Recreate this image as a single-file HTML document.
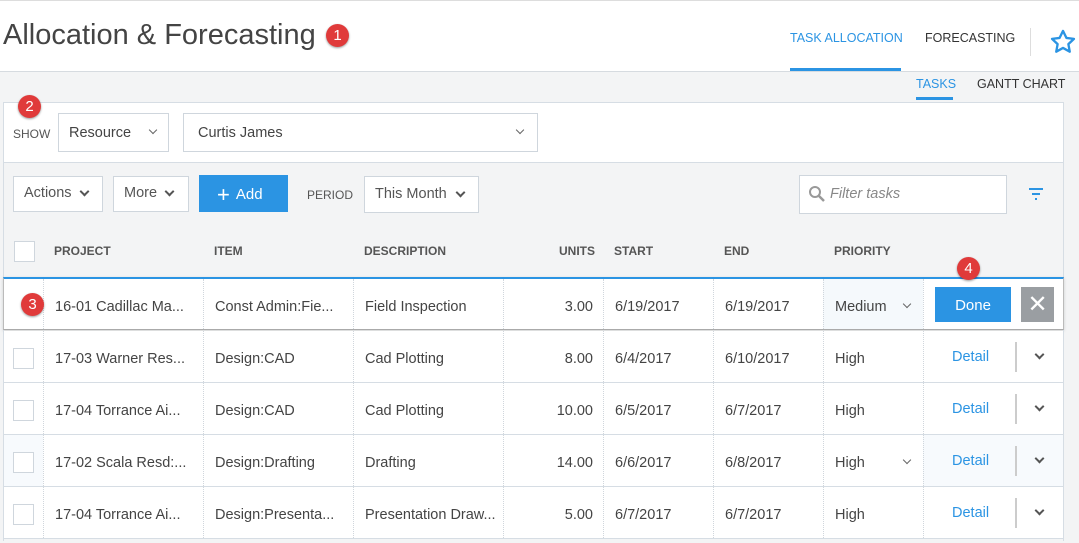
<!DOCTYPE html>
<html><head><meta charset="utf-8"><style>
*{box-sizing:border-box;margin:0;padding:0}
body{width:1079px;height:541px;overflow:hidden;background:#f3f4f5;font-family:"Liberation Sans",sans-serif;color:#444;position:relative}
.a{position:absolute}
.top{left:0;top:0;width:1079px;height:72px;background:#fff;border-top:1px solid #ddd;border-bottom:1px solid #d6dbe0}
.badge{width:23px;height:23px;border-radius:50%;background:#e03a3a;color:#fff;font-size:15px;text-align:center;line-height:23px;box-shadow:0 1px 2px rgba(0,0,0,.4)}
.box{background:#fff;border:1px solid #cfd6dd}
.chev{display:inline-block;width:7px;height:7px;border-right:2px solid #555;border-bottom:2px solid #555;transform:rotate(45deg)}
.chevt{display:inline-block;width:6px;height:6px;border-right:1px solid #666;border-bottom:1px solid #666;transform:rotate(45deg)}
.row{left:3px;width:1061px;height:52px;background:#fff;border-bottom:1px solid #d6dde4;font-size:14.5px;color:#444}
.c{position:absolute;top:0;height:100%;line-height:56px;border-left:1px dotted #d0d6dc;padding-left:11px;white-space:nowrap}
.cb{position:absolute;left:10px;top:17px;width:21px;height:21px;border:1px solid #cfd6dd;background:#fff}
.hd{font-size:12px;font-weight:bold;color:#555;position:absolute;top:19px}
.det{color:#2b94e3}
</style></head><body>
<div class="a top"></div>
<div class="a" style="left:3px;top:19px;font-size:29px;color:#444">Allocation &amp; Forecasting</div>
<div class="a badge" style="left:326px;top:24px">1</div>
<div class="a" style="left:790px;top:31px;font-size:12.5px;color:#2b94e3">TASK ALLOCATION</div>
<div class="a" style="left:790px;top:68px;width:111px;height:3px;background:#2b94e3"></div>
<div class="a" style="left:925px;top:31px;font-size:12.5px;color:#333">FORECASTING</div>
<div class="a" style="left:1030px;top:28px;width:1px;height:28px;background:#ddd"></div>
<svg class="a" style="left:1049px;top:28px" width="28" height="28" viewBox="0 0 24 24"><path d="M12 2.5l2.9 6 6.5.8-4.8 4.5 1.2 6.5L12 17.1l-5.8 3.2 1.2-6.5L2.6 9.3l6.5-.8z" fill="none" stroke="#2b94e3" stroke-width="2" stroke-linejoin="round"/></svg>
<div class="a" style="left:916px;top:77px;font-size:12.5px;color:#2b94e3">TASKS</div>
<div class="a" style="left:916px;top:97px;width:37px;height:3px;background:#2b94e3"></div>
<div class="a" style="left:977px;top:77px;font-size:12.5px;color:#333">GANTT CHART</div>

<div class="a" style="left:3px;top:102px;width:1061px;height:61px;background:#fff;border:1px solid #d6dde4"></div>
<div class="a badge" style="left:18px;top:95px">2</div>
<div class="a" style="left:13px;top:127px;font-size:12px;color:#555">SHOW</div>
<div class="a box" style="left:58px;top:113px;width:111px;height:39px"></div>
<div class="a" style="left:69px;top:125px;font-size:14.5px">Resource</div>
<div class="a chevt" style="left:150px;top:127px"></div>
<div class="a box" style="left:183px;top:113px;width:355px;height:39px"></div>
<div class="a" style="left:198px;top:125px;font-size:14.5px">Curtis James</div>
<div class="a chevt" style="left:517px;top:127px"></div>

<div class="a" style="left:3px;top:162px;width:1061px;height:64px;background:#f3f4f5;border:1px solid #d6dde4"></div>
<div class="a box" style="left:13px;top:176px;width:90px;height:36px"></div>
<div class="a" style="left:24px;top:185px;font-size:14.5px;color:#555">Actions</div>
<div class="a chev" style="left:81px;top:188px"></div>
<div class="a box" style="left:113px;top:176px;width:76px;height:36px"></div>
<div class="a" style="left:124px;top:185px;font-size:14.5px;color:#555">More</div>
<div class="a chev" style="left:166px;top:188px"></div>
<div class="a" style="left:199px;top:175px;width:89px;height:37px;background:#2b94e3;color:#fff;font-size:15px;line-height:39px;padding-left:18px"><span style="font-size:22px;vertical-align:-3px;margin-right:6px">+</span>Add</div>
<div class="a" style="left:307px;top:188px;font-size:12px;color:#555">PERIOD</div>
<div class="a box" style="left:364px;top:176px;width:115px;height:37px"></div>
<div class="a" style="left:375px;top:186px;font-size:14.5px;color:#555">This Month</div>
<div class="a chev" style="left:457px;top:189px"></div>
<div class="a box" style="left:799px;top:175px;width:208px;height:39px"></div>
<svg class="a" style="left:808px;top:185px" width="18" height="18" viewBox="0 0 18 18"><circle cx="7" cy="7" r="5" fill="none" stroke="#999" stroke-width="2"/><path d="M11 11l5 5" stroke="#999" stroke-width="2.5"/></svg>
<div class="a" style="left:830px;top:186px;font-size:14.5px;font-style:italic;color:#888">Filter tasks</div>
<svg class="a" style="left:1028px;top:187px" width="16" height="14"><path d="M1 2h14M4 7h8M7 12h2" stroke="#2b94e3" stroke-width="2"/></svg>

<div class="a" style="left:3px;top:225px;width:1061px;height:53px;background:#f3f4f5;border-left:1px solid #d6dde4;border-right:1px solid #d6dde4"></div>
<div class="a" style="left:14px;top:241px;width:21px;height:21px;border:1px solid #cfd6dd;background:#fff"></div>
<div class="hd" style="left:54px;top:244px">PROJECT</div>
<div class="hd" style="left:214px;top:244px">ITEM</div>
<div class="hd" style="left:364px;top:244px">DESCRIPTION</div>
<div class="hd" style="left:559px;top:244px">UNITS</div>
<div class="hd" style="left:614px;top:244px">START</div>
<div class="hd" style="left:724px;top:244px">END</div>
<div class="hd" style="left:834px;top:244px">PRIORITY</div>

<div class="a row" style="top:277px;height:53px;border-top:2px solid #2b94e3;border-bottom:1px solid #aaa;border-left:1px solid #bbb;border-right:1px solid #bbb;box-shadow:0 1px 3px rgba(0,0,0,.15)">
<div class="c" style="left:39px;width:160px">16-01 Cadillac Ma...</div>
<div class="c" style="left:199px;width:150px">Const Admin:Fie...</div>
<div class="c" style="left:349px;width:150px">Field Inspection</div>
<div class="c" style="left:499px;width:100px;text-align:right;padding-right:10px">3.00</div>
<div class="c" style="left:599px;width:110px">6/19/2017</div>
<div class="c" style="left:709px;width:110px">6/19/2017</div>
<div class="c" style="left:819px;width:100px;background:#f5f9fc">Medium<span class="chevt" style="position:absolute;left:80px;top:22px"></span></div>
<div class="c" style="left:919px;width:141px"></div>
</div>
<div class="a badge" style="left:21px;top:293px">3</div>
<div class="a" style="left:935px;top:287px;width:76px;height:35px;background:#2b94e3;color:#fff;font-size:15px;text-align:center;line-height:37px">Done</div>
<div class="a" style="left:1021px;top:287px;width:33px;height:35px;background:#9a9ea2;color:#fff;font-size:24px;text-align:center;line-height:35px">✕</div>
<div class="a badge" style="left:957px;top:257px">4</div>

<div class="a row" style="top:331px">
<div class="cb"></div>
<div class="c" style="left:40px;width:160px">17-03 Warner Res...</div>
<div class="c" style="left:200px;width:150px">Design:CAD</div>
<div class="c" style="left:350px;width:150px">Cad Plotting</div>
<div class="c" style="left:500px;width:100px;text-align:right;padding-right:10px">8.00</div>
<div class="c" style="left:600px;width:110px">6/4/2017</div>
<div class="c" style="left:710px;width:110px">6/10/2017</div>
<div class="c" style="left:820px;width:100px">High</div>
<div class="c" style="left:920px;width:141px"><span class="det" style="position:absolute;left:28px;top:-2px">Detail</span><span style="position:absolute;left:91px;top:11px;width:2px;height:30px;background:#ccc"></span><span class="chev" style="position:absolute;left:112px;top:20px"></span></div>
</div>
<div class="a row" style="top:383px">
<div class="cb"></div>
<div class="c" style="left:40px;width:160px">17-04 Torrance Ai...</div>
<div class="c" style="left:200px;width:150px">Design:CAD</div>
<div class="c" style="left:350px;width:150px">Cad Plotting</div>
<div class="c" style="left:500px;width:100px;text-align:right;padding-right:10px">10.00</div>
<div class="c" style="left:600px;width:110px">6/5/2017</div>
<div class="c" style="left:710px;width:110px">6/7/2017</div>
<div class="c" style="left:820px;width:100px">High</div>
<div class="c" style="left:920px;width:141px"><span class="det" style="position:absolute;left:28px;top:-2px">Detail</span><span style="position:absolute;left:91px;top:11px;width:2px;height:30px;background:#ccc"></span><span class="chev" style="position:absolute;left:112px;top:20px"></span></div>
</div>
<div class="a row" style="top:435px;background:#f7fafd">
<div class="cb"></div>
<div class="c" style="left:40px;width:160px;background:#fff">17-02 Scala Resd:...</div>
<div class="c" style="left:200px;width:150px;background:#fff">Design:Drafting</div>
<div class="c" style="left:350px;width:150px;background:#fff">Drafting</div>
<div class="c" style="left:500px;width:100px;text-align:right;padding-right:10px;background:#fff">14.00</div>
<div class="c" style="left:600px;width:110px;background:#fff">6/6/2017</div>
<div class="c" style="left:710px;width:110px;background:#fff">6/8/2017</div>
<div class="c" style="left:820px;width:100px;background:#fff">High<span class="chevt" style="position:absolute;left:80px;top:22px"></span></div>
<div class="c" style="left:920px;width:141px"><span class="det" style="position:absolute;left:28px;top:-2px">Detail</span><span style="position:absolute;left:91px;top:11px;width:2px;height:30px;background:#ccc"></span><span class="chev" style="position:absolute;left:112px;top:20px"></span></div>
</div>
<div class="a row" style="top:487px">
<div class="cb"></div>
<div class="c" style="left:40px;width:160px">17-04 Torrance Ai...</div>
<div class="c" style="left:200px;width:150px">Design:Presenta...</div>
<div class="c" style="left:350px;width:150px">Presentation Draw...</div>
<div class="c" style="left:500px;width:100px;text-align:right;padding-right:10px">5.00</div>
<div class="c" style="left:600px;width:110px">6/7/2017</div>
<div class="c" style="left:710px;width:110px">6/7/2017</div>
<div class="c" style="left:820px;width:100px">High</div>
<div class="c" style="left:920px;width:141px"><span class="det" style="position:absolute;left:28px;top:-2px">Detail</span><span style="position:absolute;left:91px;top:11px;width:2px;height:30px;background:#ccc"></span><span class="chev" style="position:absolute;left:112px;top:20px"></span></div>
</div>
<div class="a" style="left:3px;top:330px;width:1px;height:211px;background:#d6dde4"></div>
<div class="a" style="left:1063px;top:330px;width:1px;height:211px;background:#d6dde4"></div>
</body></html>
